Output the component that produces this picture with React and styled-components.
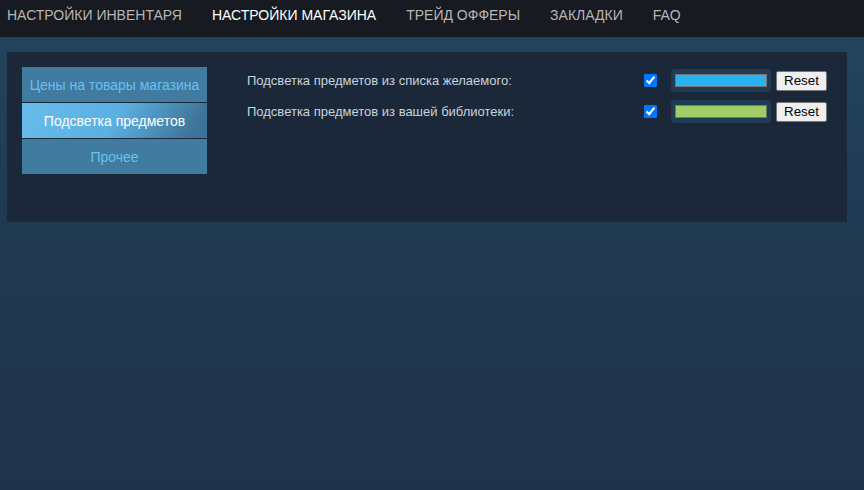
import React from 'react'
import styled, { createGlobalStyle } from 'styled-components'

const Global = createGlobalStyle`
    html, body {
        margin: 0;
        padding: 0;
        min-height: 100%;
    }
    body {
        font-family: "Liberation Sans", Arial, sans-serif;
        background: linear-gradient(to bottom, #24455f 0%, #203a53 45%, #21334a 100%);
        min-height: 490px;
    }
`

const navItems = ['Настройки инвентаря', 'Настройки магазина', 'Трейд офферы', 'Закладки', 'FAQ']
const tabs = ['Цены на товары магазина', 'Подсветка предметов', 'Прочее']
const rows = [
    { label: 'Подсветка предметов из списка желаемого:', color: '#2ab3f3' },
    { label: 'Подсветка предметов из вашей библиотеки:', color: '#9fcd66' },
]

const App = () => {
    return (
        <>
            <Global />
            <Nav>
                {navItems.map((item, i) => (
                    <NavItem key={item} $active={i === 1}>{item}</NavItem>
                ))}
            </Nav>
            <Page>
                <Panel>
                    <Sidebar>
                        {tabs.map((tab, i) => (
                            <Tab key={tab} $active={i === 1}>{tab}</Tab>
                        ))}
                    </Sidebar>
                    <Content>
                        {rows.map(row => (
                            <Row key={row.label}>
                                <Label>{row.label}</Label>
                                <Check type="checkbox" checked readOnly />
                                <ColorBox>
                                    <Swatch $color={row.color} />
                                </ColorBox>
                                <ResetButton>Reset</ResetButton>
                            </Row>
                        ))}
                    </Content>
                </Panel>
            </Page>
        </>
    )
}
export default App

const Nav = styled.nav`
    height: 37px;
    background: #171a21;
    display: flex;
    align-items: flex-start;
    gap: 30px;
    padding: 0 7px;
`

const NavItem = styled.span`
    font-size: 14px;
    line-height: 31px;
    text-transform: uppercase;
    color: ${p => (p.$active ? '#ffffff' : '#b8b6b4')};
    white-space: nowrap;
`

const Page = styled.main`
    padding: 15px 17px 0 7px;
`

const Panel = styled.section`
    height: 170px;
    box-sizing: border-box;
    background: #1b2839;
    padding: 15px 20px 15px 15px;
    display: flex;
`

const Sidebar = styled.div`
    width: 185px;
    display: flex;
    flex-direction: column;
    gap: 1px;
`

const Tab = styled.div`
    height: 35px;
    display: flex;
    align-items: center;
    justify-content: center;
    font-size: 14px;
    white-space: nowrap;
    color: ${p => (p.$active ? '#ffffff' : '#67c1f5')};
    background: ${p => (p.$active
        ? 'linear-gradient(-60deg, #3d7396 8%, #5bb0e2 50%, #66bbeb 95%)'
        : '#417b9f')};
`

const Content = styled.div`
    flex: 1;
    margin-left: 40px;
    padding-top: 2px;
    display: flex;
    flex-direction: column;
    gap: 8px;
`

const Row = styled.div`
    height: 23px;
    display: flex;
    align-items: center;
`

const Label = styled.span`
    flex: 1;
    font-size: 13px;
    color: #c6d4df;
`

const Check = styled.input`
    width: 13px;
    height: 13px;
    margin: 0 14px 0 0;
    accent-color: #0075ff;
`

const ColorBox = styled.div`
    width: 100px;
    height: 23px;
    box-sizing: border-box;
    padding: 5px 4px;
    border-radius: 3px;
    background: #213b52;
`

const Swatch = styled.div`
    height: 13px;
    box-sizing: border-box;
    border: 1px solid #767676;
    background: ${p => p.$color};
`

const ResetButton = styled.button`
    margin-left: 5px;
    width: 51px;
    height: 20px;
    padding: 0;
    font-family: "Liberation Sans", Arial, sans-serif;
    font-size: 13.33px;
    color: #000;
    background: #efefef;
    border: 1px solid #767676;
    border-radius: 2px;
`
